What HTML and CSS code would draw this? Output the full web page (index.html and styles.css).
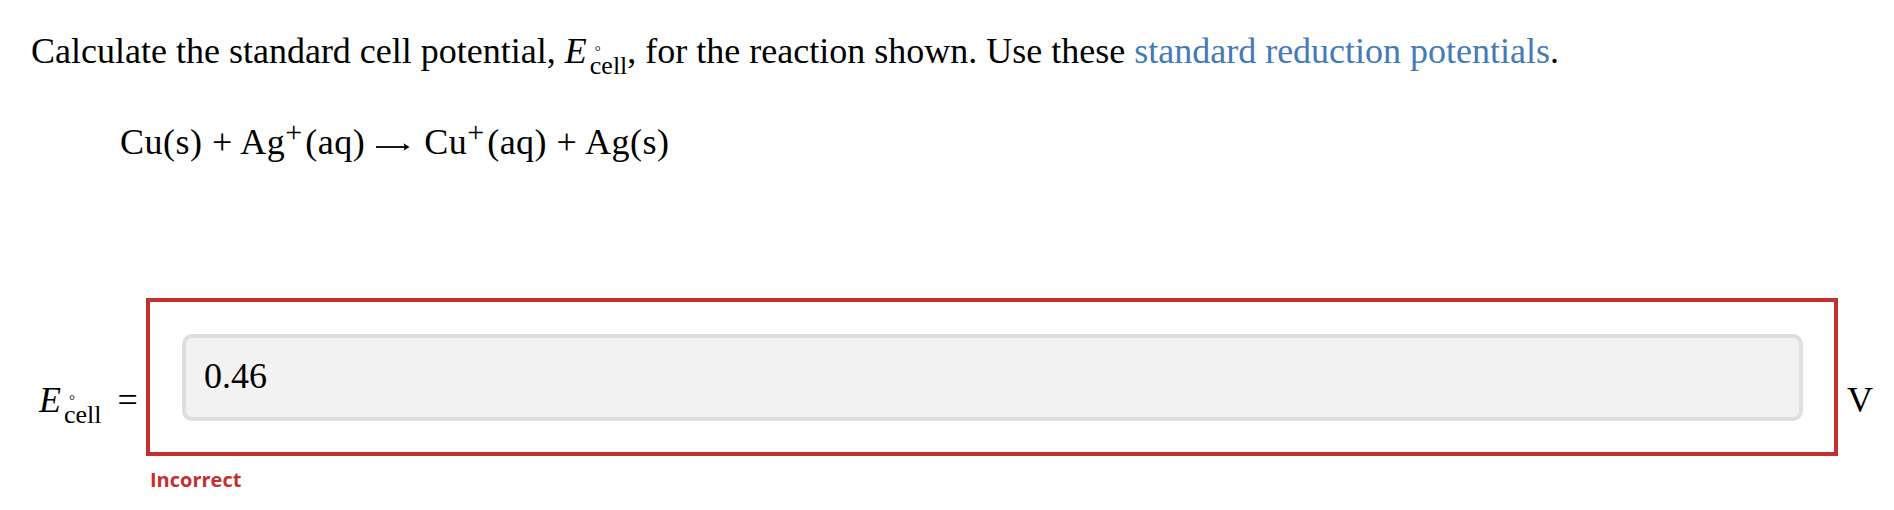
FILE: index.html
```html
<!DOCTYPE html>
<html lang="en">
<head>
<meta charset="utf-8">
<title>Standard cell potential</title>
<link rel="stylesheet" href="styles.css">
</head>
<body>
<div class="page">
  <p class="prompt">Calculate the standard cell potential, <span class="ecell"><i class="mv">E</i><span class="ss"><span class="deg">°</span><span class="sub">cell</span></span></span>, for the reaction shown. Use these <a class="link" href="#">standard reduction potentials</a>.</p>
  <p class="rxn">Cu(s) + Ag<span class="sup">+</span>(aq)<svg class="arrow" width="34" height="12" viewBox="0 0 34 12"><path d="M0 6H32" stroke="#000" stroke-width="1.8" fill="none"/><path d="M27.5 2.2 L33.5 6 L27.5 9.8 Q29.5 6 27.5 2.2Z" fill="#000"/></svg>Cu<span class="sup">+</span>(aq) + Ag(s)</p>
  <div class="answer">
    <div class="label"><span class="ecell"><i class="mv">E</i><span class="ss"><span class="deg">°</span><span class="sub">cell</span></span></span><span class="eq">=</span></div>
    <div class="box"><input class="field" type="text" value="0.46" readonly></div>
    <div class="unit">V</div>
    <div class="feedback">Incorrect</div>
  </div>
</div>
</body>
</html>
```
FILE: styles.css
```css
body {
  margin: 0;
  background: #fff;
  color: #000;
  font-family: "Liberation Serif", "Times New Roman", serif;
}
.page {
  padding: 31px 0 0 31px;
}
.prompt {
  margin: 0;
  font-size: 36px;
  line-height: 41px;
  white-space: nowrap;
}
.link {
  color: #437ab7;
  text-decoration: none;
}
.mv {
  font-style: italic;
}
.ss {
  display: inline-block;
  vertical-align: -11px;
  margin-left: 3px;
}
.deg {
  display: block;
  font-size: 15px;
  line-height: 4px;
  padding-left: 5px;
}
.sub {
  display: block;
  font-size: 26px;
  line-height: 26px;
}
.rxn {
  margin: 43px 0 0 89px;
  font-size: 36px;
  line-height: 41px;
  letter-spacing: 0.5px;
  white-space: nowrap;
}
.sup {
  font-size: 30px;
  line-height: 0;
  letter-spacing: 3px;
  vertical-align: 12px;
}
.arrow {
  vertical-align: 1px;
  margin: 0 14px 0 11px;
}
.answer {
  display: grid;
  grid-template-columns: 106px 1692px auto;
  column-gap: 9px;
  align-items: start;
  margin-top: 135px;
}
.label {
  justify-self: start;
  margin: 82px 0 0 8px;
  font-size: 36px;
  line-height: 41px;
  white-space: nowrap;
}
.eq {
  margin-left: 16px;
}
.box {
  box-sizing: border-box;
  border: 4px solid #c3302e;
  padding: 32px 31px 31px 32px;
}
.field {
  display: block;
  width: 100%;
  height: 87px;
  box-sizing: border-box;
  margin: 0;
  border: 4px solid #dedede;
  border-radius: 10px;
  background: #f2f2f2;
  padding: 0 18px 3px;
  font-family: "Liberation Serif", "Times New Roman", serif;
  font-size: 36px;
  color: #000;
  outline: none;
}
.unit {
  margin-top: 82px;
  font-size: 36px;
  line-height: 41px;
}
.feedback {
  grid-column: 2;
  margin-top: 10px;
  padding-left: 4px;
  font-family: "Open Sans", sans-serif;
  font-weight: 700;
  font-size: 20px;
  color: #c62f2f;
}
```
